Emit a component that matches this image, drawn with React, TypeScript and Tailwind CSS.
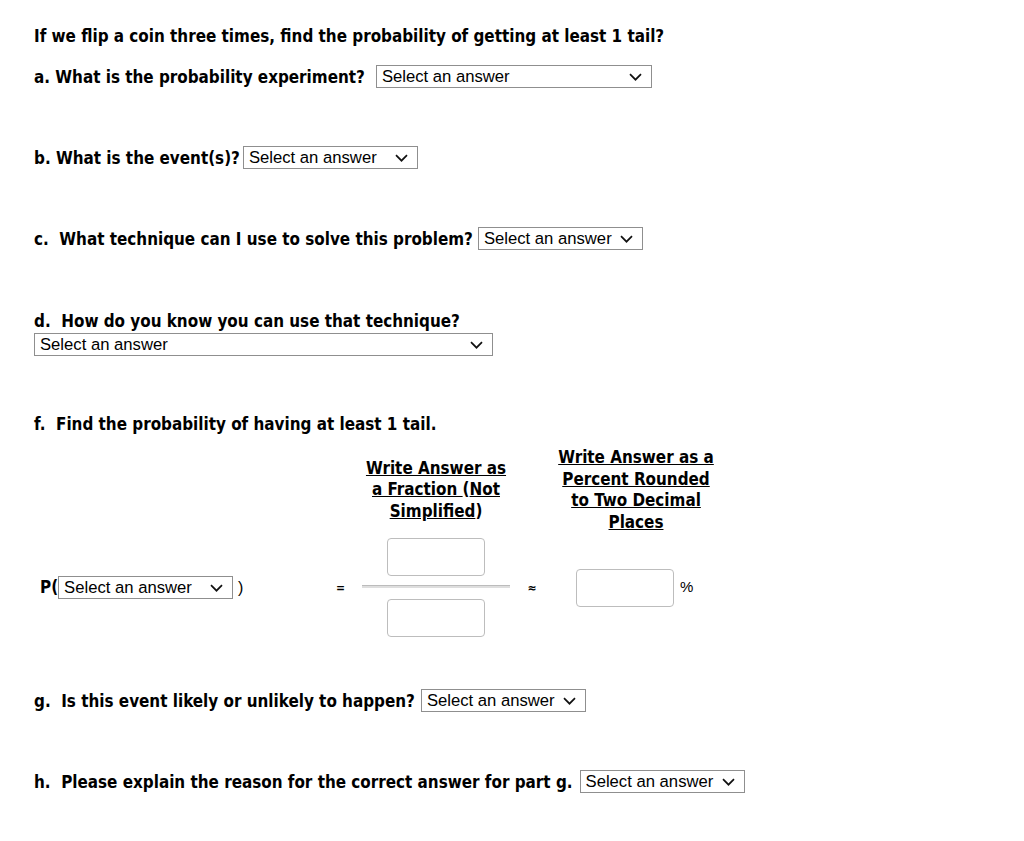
const label = "font-bold text-[16.9px] leading-[22px] text-black";
const labelFont = { fontFamily: "'DejaVu Sans Condensed', 'DejaVu Sans', sans-serif" };

function Chevron() {
  return (
    <svg width="13" height="8" viewBox="0 0 13 8" fill="none" className="shrink-0">
      <path d="M1 1.2l5.5 5.5 5.5-5.5" stroke="#111" strokeWidth="1.7" />
    </svg>
  );
}

function FakeSelect({ width }: { width: string }) {
  return (
    <div
      className={`flex h-[23px] items-center justify-between border border-[#8f8f8f] bg-white pl-[5px] pr-[9px] text-[16.67px] leading-[20px] text-black ${width}`}
      style={{ fontFamily: "'Liberation Sans', Arial, sans-serif" }}
    >
      <span>Select an answer</span>
      <Chevron />
    </div>
  );
}

function Box() {
  return <div className="h-[38px] w-[98px] rounded-[4px] border border-[#bdbdbd] bg-white" />;
}

export default function App() {
  return (
    <div className="min-h-screen bg-white pl-[34px] pt-[25px] text-black" style={labelFont}>
      <div className={label}>If we flip a coin three times, find the probability of getting at least 1 tail?</div>

      <div className="mt-[18px] flex items-center gap-[11px]">
        <span className={label}>a. What is the probability experiment?</span>
        <FakeSelect width="w-[276px]" />
      </div>

      <div className="mt-[58px] flex items-center gap-[3px]">
        <span className={label}>b. What is the event(s)?</span>
        <FakeSelect width="w-[175px]" />
      </div>

      <div className="mt-[58px] flex items-center gap-[5px]">
        <span className={label}>c.&nbsp; What technique can I use to solve this problem?</span>
        <FakeSelect width="w-[165px]" />
      </div>

      <div className="mt-[60px]">
        <div className={label + " leading-[20px]"}>d.&nbsp; How do you know you can use that technique?</div>
        <div className="mt-[1px] flex">
          <FakeSelect width="w-[459px]" />
        </div>
      </div>

      <div className={label + " mt-[57px]"}>f.&nbsp; Find the probability of having at least 1 tail.</div>

      {/* answer table */}
      <div className="mt-[12px] grid grid-cols-[286px_40px_152px_40px_168px]">
        <div />
        <div />
        <div className="flex items-center justify-center text-center font-bold text-[16.9px] leading-[21.5px]">
          <div>
            <u>Write Answer as</u>
            <br />
            <u>a Fraction </u>(<u>Not</u>
            <br />
            <u>Simplified</u>)
          </div>
        </div>
        <div />
        <div className="flex items-center justify-center text-center font-bold text-[16.9px] leading-[21.5px]">
          <div>
            <u>Write Answer as a</u>
            <br />
            <u>Percent Rounded</u>
            <br />
            <u>to Two Decimal</u>
            <br />
            <u>Places</u>
          </div>
        </div>

        <div className="mt-[5px] flex items-center pl-[6px]">
          <span className="font-bold text-[16.9px]">P(</span>
          <FakeSelect width="w-[175px]" />
          <span
            className="ml-[5px] text-[16px]"
            style={{ fontFamily: "'Liberation Sans', Arial, sans-serif" }}
          >
            )
          </span>
        </div>
        <div className="mt-[5px] flex items-center justify-center pl-[1px] font-bold text-[12px]">=</div>
        <div className="mt-[5px] flex flex-col items-center">
          <Box />
          <div className="mt-[9px] h-[3px] w-[148px] border-t border-[#bcbcbc] bg-[#dedede]" />
          <div className="mt-[11px]">
            <Box />
          </div>
        </div>
        <div className="mt-[5px] flex items-center justify-center font-bold text-[12px]">≈</div>
        <div className="mt-[5px] flex items-center pl-[24px]">
          <Box />
          <span
            className="ml-[6px] text-[15px]"
            style={{ fontFamily: "'Liberation Sans', Arial, sans-serif" }}
          >
            %
          </span>
        </div>
      </div>

      <div className="mt-[52px] flex items-center gap-[6px]">
        <span className={label}>g.&nbsp; Is this event likely or unlikely to happen?</span>
        <FakeSelect width="w-[165px]" />
      </div>

      <div className="mt-[58px] flex items-center gap-[7px]">
        <span className={label}>h.&nbsp; Please explain the reason for the correct answer for part g.</span>
        <FakeSelect width="w-[165px]" />
      </div>
    </div>
  );
}
